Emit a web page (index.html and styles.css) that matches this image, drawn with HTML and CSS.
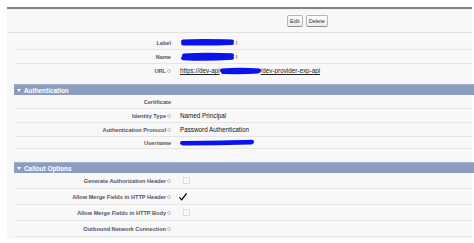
FILE: index.html
```html
<!DOCTYPE html>
<html lang="en">
<head>
  <meta charset="UTF-8">
  <meta name="viewport" content="width=device-width, initial-scale=1.0">
  <title>Named Credential Detail</title>
  <link rel="stylesheet" href="styles.css">
</head>
<body>

  <div class="detail">

    <!-- Barre des boutons -->
    <div class="btn-bar">
      <button class="btn">Edit</button>
      <button class="btn">Delete</button>
    </div>

    <!-- Infos principales -->
    <div class="section section-top">
      <div class="field">
        <div class="lbl">Label</div>
        <div class="val">
          <svg class="scribble" width="55" height="9" viewBox="0 0 55 9">
            <path d="M3 3.6 C12 2.8, 30 2.8, 52 3.4 M3 5.4 C18 5.8, 36 5.6, 52 5" />
          </svg><span class="tail">l</span>
        </div>
      </div>
      <div class="field">
        <div class="lbl">Name</div>
        <div class="val">
          <svg class="scribble" width="55" height="10" viewBox="0 0 55 10">
            <path d="M4 3.4 C14 2.8, 34 2.6, 52 3.2 M3 6.2 C18 7, 36 6.8, 52 5.8" />
          </svg><span class="tail">l</span>
        </div>
      </div>
      <div class="field last">
        <div class="lbl">URL<span class="help"></span></div>
        <div class="val">
          <a class="link" href="#">https://dev-api</a><svg class="scribble" width="41" height="8" viewBox="0 0 41 8">
            <path d="M2 3.4 C12 2.8, 26 2.6, 39 3.4 M3 5 C14 5.2, 28 5.2, 38 4.6" />
          </svg><a class="link" href="#">/dev-provider-exp-api</a>
        </div>
      </div>
    </div>

    <!-- Section Authentication -->
    <div class="sub-header">
      <svg class="twisty" width="4" height="3" viewBox="0 0 4 3"><polygon points="0,0 4,0 2,3" /></svg>
      Authentication
    </div>
    <div class="section section-auth">
      <div class="field">
        <div class="lbl">Certificate</div>
        <div class="val"></div>
      </div>
      <div class="field">
        <div class="lbl">Identity Type<span class="help"></span></div>
        <div class="val">Named Principal</div>
      </div>
      <div class="field">
        <div class="lbl">Authentication Protocol<span class="help"></span></div>
        <div class="val">Password Authentication</div>
      </div>
      <div class="field short">
        <div class="lbl">Username</div>
        <div class="val">
          <svg class="scribble" width="74" height="7" viewBox="0 0 74 7">
            <path d="M2 4 C20 3.8, 50 3.4, 72 2.8 M3 4.6 C24 4.6, 50 4.2, 71 3.6" />
          </svg>
        </div>
      </div>
    </div>

    <!-- Section Callout Options -->
    <div class="sub-header">
      <svg class="twisty" width="4" height="3" viewBox="0 0 4 3"><polygon points="0,0 4,0 2,3" /></svg>
      Callout Options
    </div>
    <div class="section section-callout">
      <div class="field">
        <div class="lbl">Generate Authorization Header<span class="help"></span></div>
        <div class="val"><span class="checkbox"></span></div>
      </div>
      <div class="field">
        <div class="lbl">Allow Merge Fields in HTTP Header<span class="help"></span></div>
        <div class="val">
          <svg class="check" width="8" height="8" viewBox="0 0 8 8">
            <path d="M0.8 4.6 L2.6 6.8 L7.2 0.8" />
          </svg>
        </div>
      </div>
      <div class="field">
        <div class="lbl">Allow Merge Fields in HTTP Body<span class="help"></span></div>
        <div class="val"><span class="checkbox"></span></div>
      </div>
      <div class="field">
        <div class="lbl">Outbound Network Connection<span class="help"></span></div>
        <div class="val"></div>
      </div>
    </div>

  </div>

</body>
</html>
```

FILE: styles.css
```css
body {
  margin: 0;
  background-color: #ffffff;
  font-family: "Liberation Sans", Arial, sans-serif;
}

.detail {
  margin: 7px 0 0 7px;
  width: 465px;
  padding-bottom: 2px;
  background-color: #f8f8f8;
  border-top: 2px solid #808386;
}

/* Barre des boutons */
.btn-bar {
  height: 23px;
  display: flex;
  align-items: center;
  gap: 3px;
  padding-left: 280px;
  border-bottom: 1px solid #e2e2e2;
  box-shadow: inset 0 1px 0 #eef1f8;
}

.btn {
  height: 12px;
  padding: 0 2px;
  margin-top: 1px;
  font-family: "Liberation Sans", Arial, sans-serif;
  font-size: 5.6px;
  color: #333;
  background: linear-gradient(#ffffff, #ececec);
  border: 1px solid #b5b5b5;
  border-bottom-color: #8f8f8f;
  border-radius: 2px;
}

/* Lignes de champs */
.section {
  margin-left: 9px;
}

.section-top {
  padding-top: 3px;
  margin-bottom: 7px;
}

.section-auth {
  margin-bottom: 13px;
}

.field {
  display: flex;
  align-items: center;
  height: 13px;
  border-bottom: 1px solid #e6e6e6;
}

.field.last {
  border-bottom: none;
}

.field.short {
  height: 11px;
}

.section-callout .field {
  height: 15px;
}

.lbl {
  width: 155px;
  flex-shrink: 0;
  text-align: right;
  font-size: 5.6px;
  font-weight: bold;
  color: #55555f;
}

.val {
  display: flex;
  align-items: center;
  padding-left: 9px;
  font-size: 6.3px;
  color: #111;
}

.help {
  display: inline-block;
  width: 2.5px;
  height: 2.5px;
  margin-left: 0.5px;
  border: 0.6px solid #c4c4c4;
  border-radius: 50%;
  vertical-align: middle;
}

.link {
  color: #222;
  text-decoration: underline;
}

.tail {
  margin-left: 1px;
  font-size: 6px;
  color: #444;
}

.scribble path {
  fill: none;
  stroke: #0b12f0;
  stroke-width: 4;
  stroke-linecap: round;
}

/* Titres de section */
.sub-header {
  height: 11px;
  display: flex;
  align-items: center;
  gap: 3px;
  margin: 0 -2px 0 7px;
  padding-left: 3px;
  background-color: #8c9dbf;
  border-top: 1px solid #a3b1cd;
  box-sizing: border-box;
  font-size: 6.4px;
  font-weight: bold;
  color: #ffffff;
}

.twisty polygon {
  fill: #ffffff;
}

/* Cases a cocher */
.checkbox {
  display: inline-block;
  width: 5px;
  height: 5px;
  margin-left: 3px;
  background-color: #fbfbfb;
  border: 1px solid #dcdcdc;
}

.check {
  margin-left: -1px;
}

.check path {
  fill: none;
  stroke: #000;
  stroke-width: 1.3;
  stroke-linecap: round;
  stroke-linejoin: round;
}
```
